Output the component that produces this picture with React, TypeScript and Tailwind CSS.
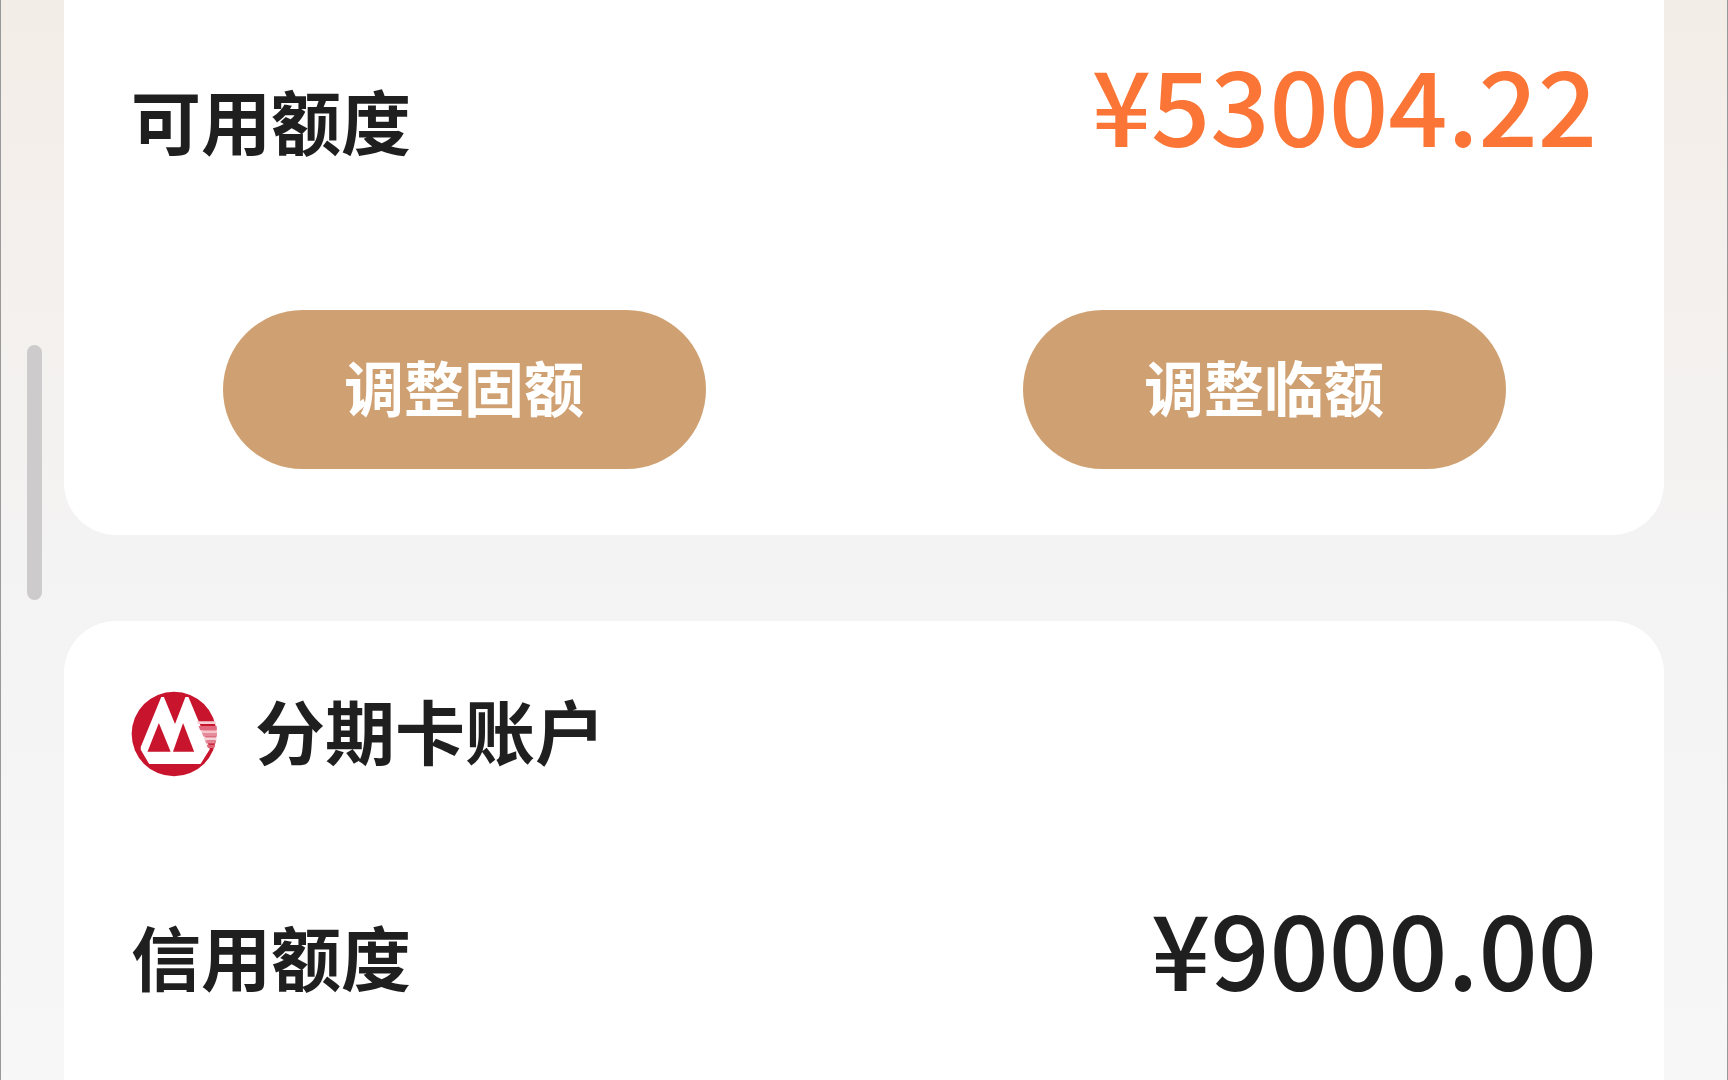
function BankLogo() {
  return (
    <svg className="size-[86px] shrink-0" viewBox="18 18 256 256" aria-hidden="true">
      <circle cx="146" cy="146" r="126" fill="#c8152d" />
      <path
        d="M108 36h8l33 80 31-80h9l63 150v6l-27 43H72l-25-42v-8z"
        fill="#fff"
      />
      <path d="M101 113l-34 86h69z" fill="#c8152d" />
      <path d="M173 113l-30 86h63z" fill="#c8152d" />
      <path d="M214 108h54l4 8h-55z" fill="#f7cdd3" />
      <path d="M219 122h54l1 13h-50z" fill="#e2697d" />
      <path d="M225 135h50v8h-46z" fill="#f5c3ca" />
      <path d="M229 143h45v11h-40z" fill="#e58c9b" />
      <path d="M234 156h39l-1 9h-35z" fill="#f3d3d8" />
      <path d="M238 165h34l-3 9h-27z" fill="#e28494" />
      <path d="M243 178h26l-3 10h-19z" fill="#de6478" />
    </svg>
  );
}

function Amount({ value, className }: { value: string; className: string }) {
  return (
    <span className={`text-[104px] leading-[106px] font-medium ${className}`}>
      ¥{value}
    </span>
  );
}

const actions = ["调整固额", "调整临额"];

export default function App() {
  return (
    <div className="relative flex min-h-screen flex-col border-x border-[#999] bg-linear-to-b from-[#f3ede7] via-[#f4f3f3] to-[#f7f7f7] px-[63px] font-['Noto_Sans_CJK_SC',sans-serif] text-[#1f1f1f]">
      <div className="absolute top-[345px] left-[26px] h-[255px] w-[15px] rounded-full bg-[#cdcbcb]" />

      <section className="rounded-b-[52px] bg-white pt-[49px] pb-[66px]">
        <div className="flex items-end justify-between px-[67px]">
          <span className="text-[70px] leading-none font-bold">可用额度</span>
          <Amount value="53004.22" className="text-[#fb7636]" />
        </div>
        <div className="mt-[155px] grid grid-cols-2 justify-items-center">
          {actions.map((label) => (
            <button
              key={label}
              type="button"
              className="h-[159px] w-[483px] rounded-full bg-[#cfa172] pb-2 text-[60px] leading-none font-bold text-white"
            >
              {label}
            </button>
          ))}
        </div>
      </section>

      <section className="mt-[86px] flex-1 rounded-t-[52px] bg-white px-[67px] pt-[70px]">
        <div className="flex items-center gap-[38px]">
          <BankLogo />
          <h2 className="pb-2 text-[70px] leading-none font-bold">分期卡账户</h2>
        </div>
        <div className="mt-[116px] flex items-end justify-between">
          <span className="pb-2 text-[70px] leading-none font-bold">信用额度</span>
          <Amount value="9000.00" className="" />
        </div>
      </section>
    </div>
  );
}
